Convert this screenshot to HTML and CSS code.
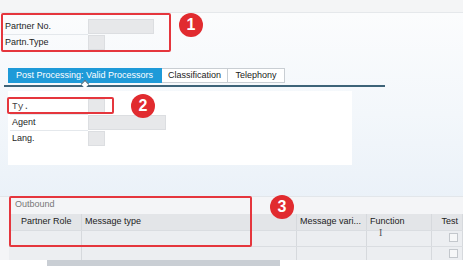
FILE: index.html
```html
<!DOCTYPE html>
<html>
<head>
<meta charset="utf-8">
<link rel="stylesheet" href="styles.css">
</head>
<body>
<div class="screen">
  <div class="topbar"></div>
  <div class="main">
    <div class="header">
      <div class="frow"><span class="lbl">Partner No.</span><span class="inp w66"></span></div>
      <div class="frow"><span class="lbl">Partn.Type</span><span class="inp w17"></span></div>
    </div>
    <div class="tabs">
      <span class="tab active">Post Processing: Valid Processors</span>
      <span class="tab t2">Classification</span>
      <span class="tab t3">Telephony</span>
    </div>
    <div class="tabline"><span class="caret"></span></div>
    <div class="panel">
      <div class="frow"><span class="lbl mono">Ty.</span><span class="inp w17"></span></div>
      <div class="frow"><span class="lbl">Agent</span><span class="inp w78"></span></div>
      <div class="frow"><span class="lbl">Lang.</span><span class="inp w17"></span></div>
    </div>
    <div class="outbound">
      <div class="otitle">Outbound</div>
      <div class="grid ghead">
        <div class="c c0"></div>
        <div class="c c1">Partner Role</div>
        <div class="c c2">Message type</div>
        <div class="c c3">Message vari...</div>
        <div class="c c4">Function</div>
        <div class="c c5">Test</div>
      </div>
      <div class="grid grow">
        <div class="c c0"></div><div class="c c1"></div><div class="c c2"></div><div class="c c3"></div><div class="c c4"></div><div class="c c5"><span class="chk"></span></div>
      </div>
      <div class="grid grow">
        <div class="c c0"></div><div class="c c1"></div><div class="c c2"></div><div class="c c3"></div><div class="c c4"></div><div class="c c5"><span class="chk"></span></div>
      </div>
    </div>
    <div class="scroll"><span class="thumb"></span></div>
    <span class="cursor">I</span>
  </div>
  <div class="box box1"></div>
  <div class="badge b1">1</div>
  <div class="box box2"></div>
  <div class="badge b2">2</div>
  <div class="box box3"></div>
  <div class="badge b3">3</div>
</div>
</body>
</html>
```
FILE: styles.css
```css
* { box-sizing: border-box; }
html, body { margin: 0; padding: 0; }
body { width: 474px; height: 266px; overflow: hidden; background: #ffffff; font-family: "Liberation Sans", "DejaVu Sans", sans-serif; font-size: 9px; color: #222; }
.screen { position: relative; width: 474px; height: 266px; }
.topbar { height: 13px; background: #f4f5f6; border-bottom: 1px solid #e5e8eb; width: 463px; }
.main { position: relative; width: 463px; height: 253px; background: linear-gradient(180deg, #fbfcfd 0%, #f3f7fb 40%, #eaf1f8 75%, #edf2f7 100%); }
.header { padding-top: 6px; padding-left: 3px; }
.frow { display: flex; align-items: stretch; height: 16px; }
.lbl { width: 85px; padding-left: 2px; line-height: 15px; border-bottom: 1px solid #e4e8ec; color: #1e1e1e; white-space: nowrap; }
.header .frow:last-child .lbl, .panel .frow:last-child .lbl { border-bottom: none; }
.mono { font-family: "Liberation Mono", "DejaVu Sans Mono", monospace; font-size: 9.5px; color: #444; }
.inp { height: 15px; background: #e7e8ea; border: 1px solid #dcdee1; }
.w66 { width: 66px; }
.w17 { width: 17px; }
.w78 { width: 78px; }
.tabs { display: flex; margin-top: 17px; margin-left: 8px; height: 15px; white-space: nowrap; }
.tab { line-height: 13px; padding: 0 7px; border: 1px solid #c9ced3; border-left: none; background: #ffffff; color: #222; text-align: center; }
.tab.active { background: #1e9ad8; border-color: #1e9ad8; color: #ffffff; padding: 0; width: 154px; }
.t2 { width: 66px; padding: 0; }
.t3 { width: 57px; padding: 0; }
.tabline { position: relative; margin-top: 2px; margin-left: 4px; width: 381px; height: 2px; background: #3d6378; }
.caret { position: absolute; left: 78px; top: -4px; width: 6px; height: 6px; border-left: 1.5px solid #3d6378; border-top: 1.5px solid #3d6378; transform: rotate(45deg); background: #ffffff; }
.panel { margin-top: 4px; margin-left: 8px; width: 344px; height: 74px; background: #ffffff; padding-top: 8px; padding-left: 2px; }
.panel .lbl { width: 78px; }
.outbound { margin-top: 31px; border-top: 1px solid #e2e6ea; background: #f4f5f7; height: 64px; padding-left: 9px; }
.otitle { color: #777; height: 17px; line-height: 15px; padding-left: 6px; }
.grid { display: flex; height: 16px; }
.ghead { background: #e3e5e8; }
.grow { background: #eceef1; border-top: 1px solid #dadde1; }
.c { border-right: 1px solid #d6d9dd; line-height: 15px; white-space: nowrap; overflow: hidden; padding-left: 3px; }
.c0 { width: 9px; border-right: none; }
.c1 { width: 64px; padding-left: 3px; }
.c2 { width: 215px; }
.c3 { width: 70px; }
.c4 { width: 65px; }
.c5 { width: 31px; border-right: 1px solid #d6d9dd; text-align: right; padding-right: 4px; position: relative; }
.chk { display: inline-block; width: 9px; height: 9px; border: 1px solid #c3c7cc; background: #f6f7f8; vertical-align: middle; margin-top: -2px; }
.scroll { position: relative; height: 6px; background: #ffffff; }
.thumb { position: absolute; left: 47px; top: 0; width: 233px; height: 6px; background: #c9ced4; }
.cursor { position: absolute; left: 379px; top: 214px; font-family: "Liberation Serif", serif; font-size: 10px; color: #555; }
.box { position: absolute; border: 2px solid #e5363d; border-radius: 2px; }
.box1 { left: 1px; top: 13px; width: 170px; height: 39px; }
.box2 { left: 7px; top: 97px; width: 107px; height: 17px; }
.box3 { left: 9px; top: 196px; width: 243px; height: 51px; }
.badge { position: absolute; width: 24px; height: 24px; border-radius: 50%; background: #e12b2f; color: #ffffff; font-family: "Liberation Sans", sans-serif; font-weight: bold; font-size: 16px; line-height: 24px; text-align: center; }
.b1 { left: 179px; top: 13px; }
.b2 { left: 131px; top: 94px; }
.b3 { left: 270px; top: 195px; }
```
